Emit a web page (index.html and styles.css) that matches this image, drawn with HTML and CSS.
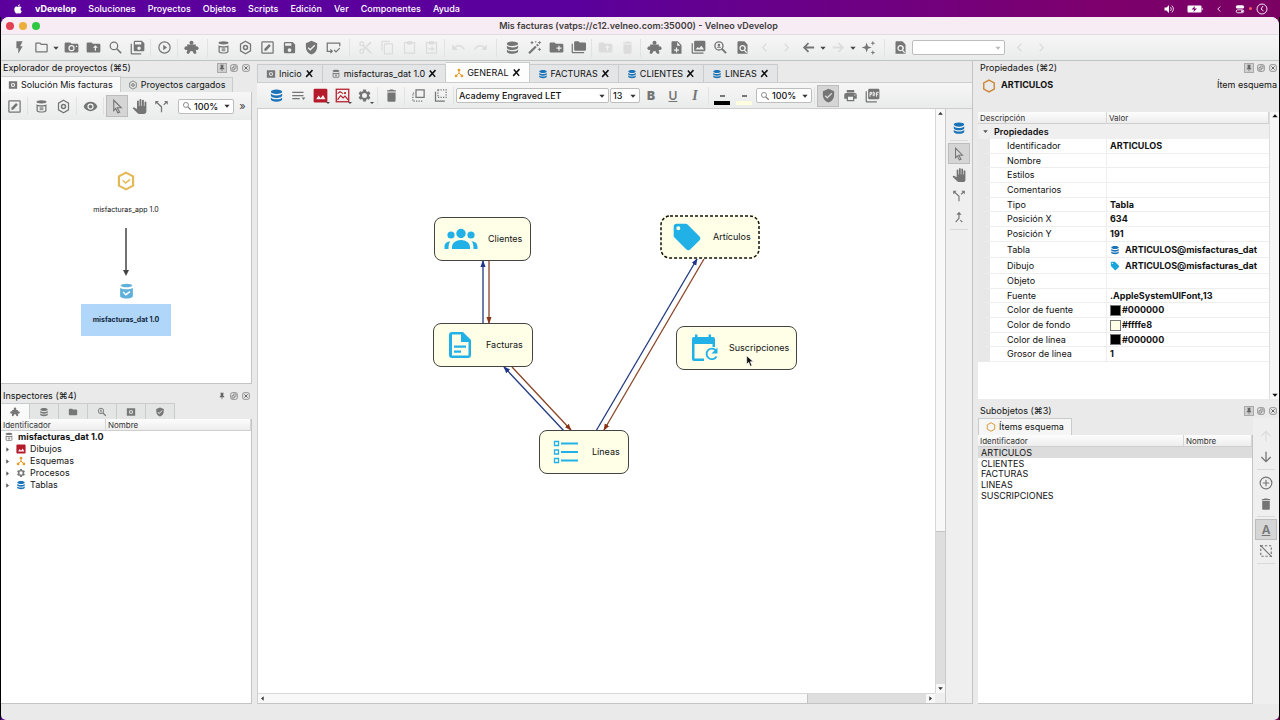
FILE: index.html
```html
<!DOCTYPE html>
<html lang="es">
<head>
<meta charset="utf-8">
<title>Mis facturas - Velneo vDevelop</title>
<link rel="stylesheet" href="styles.css">
</head>
<body>
<svg class="sprite" aria-hidden="true">
<symbol id="apple" viewBox="0 0 24 24"><path d="M17 12.600c0-2.400 2-3.500 2-3.600-1.100-1.600-2.800-1.800-3.400-1.800-1.400-.2-2.800.8-3.500.8s-1.800-.8-3-.8c-1.500 0-3 .9-3.800 2.300-1.600 2.800-.4 7 1.200 9.300.8 1.100 1.700 2.400 2.900 2.300 1.200 0 1.600-.8 3-.8s1.800.8 3 .7c1.300 0 2.100-1.100 2.900-2.200.9-1.300 1.300-2.600 1.300-2.600s-2.600-1-2.600-3.600zM14.700 5.700c.6-.8 1.100-1.900 1-3-1 0-2.100.6-2.800 1.400-.6.7-1.200 1.800-1 2.900 1.100.1 2.200-.5 2.800-1.300z"/></symbol>
<symbol id="sound" viewBox="0 0 24 24"><path d="M3 9v6h4l5 5V4L7 9z"/><path d="M14.500 8a5 5 0 0 1 0 8M17.500 5a9 9 0 0 1 0 14" fill="none" stroke="currentColor" stroke-width="1.600"/></symbol>
<symbol id="battery" viewBox="0 0 34 24"><path d="M5 5h24a2 2 0 0 1 2 2v10a2 2 0 0 1-2 2H5a2 2 0 0 1-2-2V7a2 2 0 0 1 2-2zm13 1l-7 7h5l-1 5 7-7h-5zM32 9.500v5c2-.5 2-4.500 0-5z" fill-rule="evenodd"/></symbol>
<symbol id="control" viewBox="0 0 24 24"><rect x="2" y="3" width="20" height="8" rx="4"/><rect x="3" y="14" width="18" height="7" rx="3.500" fill="none" stroke="currentColor" stroke-width="2"/><circle cx="17" cy="17.500" r="2.500"/></symbol>
<symbol id="siri" viewBox="0 0 24 24"><circle cx="12" cy="12" r="10" fill="none" stroke="currentColor" stroke-width="1.800"/><path d="M14 6l-4 6 5 4" fill="none" stroke="currentColor" stroke-width="1.800"/></symbol>
<symbol id="bolt" viewBox="0 0 24 24"><path d="M7 2v11h3v9l7-12h-4l4-8z"/></symbol>
<symbol id="folder-o" viewBox="0 0 24 24"><path d="M9.170 6l2 2H20v10H4V6h5.170M10 4H4c-1.100 0-2 .9-2 2v12c0 1.100.9 2 2 2h16c1.100 0 2-.9 2-2V8c0-1.100-.9-2-2-2h-8l-2-2z"/></symbol>
<symbol id="folder" viewBox="0 0 24 24"><path d="M10 4H4c-1.100 0-2 .9-2 2v12c0 1.100.9 2 2 2h16c1.100 0 2-.9 2-2V8c0-1.100-.9-2-2-2h-8l-2-2z"/></symbol>
<symbol id="folder-cog" viewBox="0 0 24 24"><path fill-rule="evenodd" d="M10 4H3c-1 0-2 .9-2 2v12c0 1.100 1 2 2 2h18c1 0 2-.9 2-2V8c0-1.100-1-2-2-2h-9zM12 8a5 5 0 1 0 0 10 5 5 0 0 0 0-10zm0 2a3 3 0 1 1 0 6 3 3 0 0 1 0-6zM19 9h2v2h-2z"/><circle cx="12" cy="13" r="1.500"/></symbol>
<symbol id="folder-up" viewBox="0 0 24 24"><path fill-rule="evenodd" d="M9 4H3c-1 0-2 .9-2 2v12c0 1.100 1 2 2 2h18c1 0 2-.9 2-2V8c0-1.100-1-2-2-2h-10zM15 8.500l-4 4h3V17h2v-4.500h3z"/></symbol>
<symbol id="folder-plus" viewBox="0 0 24 24"><path fill-rule="evenodd" d="M9 4H3c-1 0-2 .9-2 2v12c0 1.100 1 2 2 2h18c1 0 2-.9 2-2V8c0-1.100-1-2-2-2h-10zM15 9h2v3h3v2h-3v3h-2v-3h-3v-2h3z"/></symbol>
<symbol id="folders" viewBox="0 0 24 24"><path d="M12 2H7a2 2 0 0 0-2 2v11c0 1.100.9 2 2 2h15a2 2 0 0 0 2-2V6a2 2 0 0 0-2-2h-8zM3 6H1v13a2 2 0 0 0 2 2h18v-2H3z"/></symbol>
<symbol id="search" viewBox="0 0 24 24"><circle cx="9.500" cy="9.500" r="6" fill="none" stroke="currentColor" stroke-width="2"/><path d="M14 14l7 7" stroke="currentColor" stroke-width="2.600"/></symbol>
<symbol id="search-gear" viewBox="0 0 24 24"><circle cx="9.500" cy="9.500" r="6.500" fill="none" stroke="currentColor" stroke-width="2.200"/><path d="M14 14l7 7" stroke="currentColor" stroke-width="3"/><circle cx="9.500" cy="8" r="2"/><path d="M6 12.500c1-3 6-3 7 0z"/></symbol>
<symbol id="save" viewBox="0 0 24 24"><path d="M17 3H5a2 2 0 0 0-2 2v14c0 1.100.9 2 2 2h14c1.100 0 2-.9 2-2V7l-4-4zm-5 16a3 3 0 1 1 0-6 3 3 0 0 1 0 6zm3-10H5V5h10v4z"/></symbol>
<symbol id="save-all" viewBox="0 0 24 24"><path d="M19 1H8a2 2 0 0 0-2 2v13c0 1.100.9 2 2 2h13c1.100 0 2-.9 2-2V5l-4-4zm-4.500 15a2.800 2.800 0 1 1 0-5.600 2.800 2.800 0 0 1 0 5.600zM18 7H8V3h10v4zM3 6H1v15a2 2 0 0 0 2 2h15v-2H3z"/></symbol>
<symbol id="play" viewBox="0 0 24 24"><path d="M10 16.500l6-4.500-6-4.500v9zM12 2a10 10 0 1 0 0 20 10 10 0 0 0 0-20zm0 18a8 8 0 1 1 0-16 8 8 0 0 1 0 16z"/></symbol>
<symbol id="puzzle4" viewBox="0 0 24 24"><path d="M5 7h14v13.500h-4a3 3 0 0 0-6 0H5z"/><circle cx="12" cy="4.500" r="3.200"/><circle cx="20.300" cy="13" r="3"/><circle cx="3.700" cy="13" r="3"/><circle cx="6.500" cy="20" r="2.300"/><circle cx="17.500" cy="20" r="2.300"/></symbol>
<symbol id="cyl" viewBox="0 0 24 24"><ellipse cx="12" cy="4.500" rx="8" ry="2.700"/><path d="M4 8.500c3 2 13 2 16 0V19c-2 3.500-14 3.500-16 0zm2 3v7c2 2 10 2 12 0v-7c-3 1-9 1-12 0z" fill-rule="evenodd"/><path d="M9 13h6v5H9z" opacity=".7"/></symbol>
<symbol id="cyl-ok" viewBox="0 0 24 24"><ellipse cx="12" cy="3.500" rx="8" ry="2.500"/><path d="M3 7c4 2.500 14 2.500 18 0v12c-3 4-15 4-18 0zm3.500 6L11 18l6.500-5-1.200-1.600L11 15l-3-3z" fill-rule="evenodd"/></symbol>
<symbol id="hexcog" viewBox="0 0 24 24"><path d="M12 2l8 4.700v10.600L12 22l-8-4.700V6.700z" fill="none" stroke="currentColor" stroke-width="2"/><circle cx="12" cy="12" r="3.200" fill="none" stroke="currentColor" stroke-width="2.400"/></symbol>
<symbol id="hexok" viewBox="0 0 24 24"><path d="M12 2l8.500 4.500v11L12 22l-8.500-4.500v-11z" fill="none" stroke="currentColor" stroke-width="2.600"/><path d="M8 11l3.500 3.500L17 10" fill="none" stroke="currentColor" stroke-width="1.800"/></symbol>
<symbol id="hex" viewBox="0 0 24 24"><path d="M12 1.800l9 5v10.400l-9 5-9-5V6.800z" fill="none" stroke="currentColor" stroke-width="2.400"/></symbol>
<symbol id="editbox" viewBox="0 0 24 24"><rect x="3" y="3" width="18" height="18" rx="1" fill="none" stroke="currentColor" stroke-width="2"/><path d="M7 17v-3l7.500-7.500 2.800 2.800L10 17z"/></symbol>
<symbol id="shield" viewBox="0 0 24 24"><path d="M12 1L3 5v6c0 5.550 3.840 10.740 9 12 5.160-1.260 9-6.450 9-12V5l-9-4zm-2 16l-4-4 1.410-1.410L10 14.170l6.590-6.590L18 9l-8 8z"/></symbol>
<symbol id="boxcheck" viewBox="0 0 24 24"><path d="M22 10V5H2v13h8M7 21l3-3-3-3M13 16l3 3 6-6" fill="none" stroke="currentColor" stroke-width="2"/></symbol>
<symbol id="cut" viewBox="0 0 24 24"><path d="M9.640 7.640c.23-.5.36-1.050.36-1.640a4 4 0 1 0-4 4c.59 0 1.140-.13 1.640-.36L10 12l-2.360 2.360A4 4 0 1 0 10 18c0-.59-.13-1.140-.36-1.640L12 14l7 7h3v-1L9.640 7.640zM6 8a2 2 0 1 1 0-4 2 2 0 0 1 0 4zm0 12a2 2 0 1 1 0-4 2 2 0 0 1 0 4zM19 3l-6 6 2 2 7-7V3z"/></symbol>
<symbol id="copy" viewBox="0 0 24 24"><path d="M16 1H4a2 2 0 0 0-2 2v14h2V3h12V1zm3 4H8a2 2 0 0 0-2 2v14c0 1.100.9 2 2 2h11c1.100 0 2-.9 2-2V7a2 2 0 0 0-2-2zm0 16H8V7h11v14z"/></symbol>
<symbol id="paste" viewBox="0 0 24 24"><path d="M4 4h16v17H4z" fill="none" stroke="currentColor" stroke-width="2"/><path d="M8 2h8v5H8z"/></symbol>
<symbol id="paste-in" viewBox="0 0 24 24"><path d="M4 4h16v17H4z" fill="none" stroke="currentColor" stroke-width="2"/><path d="M8 2h8v5H8zM7 13h5v-3l5 4-5 4v-3H7z"/></symbol>
<symbol id="undo" viewBox="0 0 24 24"><path d="M12.500 8c-2.650 0-5.050.99-6.900 2.600L2 7v9h9l-3.620-3.620c1.390-1.160 3.160-1.880 5.120-1.880 3.540 0 6.550 2.310 7.600 5.500l2.370-.78C21.080 11.030 17.150 8 12.500 8z"/></symbol>
<symbol id="redo" viewBox="0 0 24 24"><path d="M11.500 8c2.650 0 5.050.99 6.900 2.600L22 7v9h-9l3.620-3.620c-1.390-1.160-3.160-1.880-5.120-1.880-3.540 0-6.550 2.310-7.600 5.500l-2.370-.78C2.920 11.030 6.850 8 11.500 8z"/></symbol>
<symbol id="db" viewBox="0 0 24 24"><path d="M12 2.500c-5 0-9 1.500-9 3.600s4 3.600 9 3.600 9-1.500 9-3.600-4-3.600-9-3.600zM3 8.800v3.700c0 2 4 3.500 9 3.500s9-1.500 9-3.500V8.800c-1 2-4.500 3-9 3s-8-1-9-3zM3 15v3.500C3 20.500 7 22 12 22s9-1.500 9-3.500V15c-1 2-4.500 3-9 3s-8-1-9-3z"/></symbol>
<symbol id="wand" viewBox="0 0 24 24"><path d="M2 20L13 9l2.500 2.500-11 11z"/><path d="M14.500 8l2-2 2.500 2.500-2 2zM5 4l2-1 1-2 1 2 2 1-2 1-1 2-1-2zM19 14l1-2 1 2 2 1-2 1-1 2-1-2-2-1zM20 1l1 2 2 1-2 1-1 2-1-2-2-1 2-1zM13 2h2v2h-2z"/></symbol>
<symbol id="trash" viewBox="0 0 24 24"><path d="M5.500 20c0 1.100.9 2 2 2h9c1.100 0 2-.9 2-2V7h-13v13zM19 3.500h-3.500l-1-1h-5l-1 1H5v2h14v-2z"/></symbol>
<symbol id="docplus" viewBox="0 0 24 24"><path fill-rule="evenodd" d="M5 2h9l6 6v14H5a1 1 0 0 1-1-1V3zM13 3.500V9h5.500zM11 12v3H8v2h3v3h2v-3h3v-2h-3v-3z"/></symbol>
<symbol id="images" viewBox="0 0 24 24"><path fill-rule="evenodd" d="M7 1h14a2 2 0 0 1 2 2v13a2 2 0 0 1-2 2H7a2 2 0 0 1-2-2V3c0-1 1-2 2-2zm0 14h14l-4.500-6-3.500 4-2-2zM3 5H1v15a2 2 0 0 0 2 2h17v-2H3z"/></symbol>
<symbol id="docfind" viewBox="0 0 24 24"><path fill-rule="evenodd" d="M5 2h10l5 5v15H4V3zm7 6a5 5 0 1 0 2.500 9.300L18 21l1.400-1.400-3.200-3.200A5 5 0 0 0 12 8zm0 2a3 3 0 1 1 0 6 3 3 0 0 1 0-6z"/></symbol>
<symbol id="chev-l" viewBox="0 0 24 24"><path d="M15 6l-6 6 6 6" fill="none" stroke="currentColor" stroke-width="2"/></symbol>
<symbol id="chev-r" viewBox="0 0 24 24"><path d="M9 6l6 6-6 6" fill="none" stroke="currentColor" stroke-width="2"/></symbol>
<symbol id="back" viewBox="0 0 24 24"><path d="M21 10.500H8.500l4.500-4.600L11 4l-8 8 8 8 2-1.900-4.500-4.600H21z"/></symbol>
<symbol id="fwd" viewBox="0 0 24 24"><path d="M3 10.500h12.500L11 5.900 13 4l8 8-8 8-2-1.900 4.500-4.600H3z"/></symbol>
<symbol id="sparkle" viewBox="0 0 24 24"><path d="M9 4l2 6 6 2-6 2-2 6-2-6-6-2 6-2zM19 1l1 3 3 1-3 1-1 3-1-3-3-1 3-1zM19 16l1 3 3 1-3 1-1 3-1-3-3-1 3-1z"/></symbol>
<symbol id="eye" viewBox="0 0 24 24"><path d="M12 4.500C7 4.500 2.730 7.610 1 12c1.730 4.390 6 7.500 11 7.500s9.270-3.110 11-7.500c-1.730-4.390-6-7.500-11-7.500zM12 17a5 5 0 1 1 0-10 5 5 0 0 1 0 10zm0-8a3 3 0 1 0 0 6 3 3 0 0 0 0-6z"/></symbol>
<symbol id="cursor" viewBox="0 0 24 24"><path d="M6 2l12 12h-6.500l4 7-3 1.200-3.500-7L6 18.500z" fill="none" stroke="currentColor" stroke-width="1.800"/></symbol>
<symbol id="hand" viewBox="0 0 24 24"><path d="M23 5.500V20c0 2.200-1.800 4-4 4h-7.300c-1.080 0-2.100-.43-2.850-1.190L1 14.830s1.260-1.230 1.300-1.250c.5-.4 1-.3 1.390-.13.04.01 4.310 2.460 4.310 2.460V4a1.500 1.500 0 0 1 3 0v7h1V1.500a1.500 1.500 0 0 1 3 0V11h1V2.500a1.500 1.500 0 0 1 3 0V11h1V5.500a1.500 1.500 0 0 1 3 0z"/></symbol>
<symbol id="split" viewBox="0 0 24 24"><path d="M16 3l2.300 2.300-3.500 3.300 1.400 1.400 3.500-3.300L22 9V3zM8 3H2v6l2.300-2.300L11 13v8h2v-9L5.700 5.300z"/></symbol>
<symbol id="merge" viewBox="0 0 24 24"><path d="M17 21.400l1.400-1.400-3.400-3.400-1.400 1.400zM7.500 8H11v5.600L5.600 20 7 21.400l6-7V8h3.500L12 3z"/></symbol>
<symbol id="lines" viewBox="0 0 24 24"><path d="M2 6h18v2H2zM2 11h18v2H2zM2 16h12v2H2zM17 15h6l-3 4z"/></symbol>
<symbol id="image" viewBox="0 0 24 24"><path d="M23 21V3a2 2 0 0 0-2-2H3a2 2 0 0 0-2 2v18c0 1.100.9 2 2 2h18a2 2 0 0 0 2-2zM5 18l4-6 3 4 2-2 2-3 4 7z"/></symbol>
<symbol id="image-o" viewBox="0 0 24 24"><rect x="2" y="2" width="20" height="20" fill="none" stroke="currentColor" stroke-width="2"/><path d="M4 19l5-7 4 4 3-3 5 6M4 9l4-3 5 3" fill="none" stroke="currentColor" stroke-width="1.800"/><circle cx="16" cy="8" r="1.800"/></symbol>
<symbol id="gear" viewBox="0 0 24 24"><path d="M19.140 12.940a7 7 0 0 0 0-1.880l2.030-1.580a.49.49 0 0 0 .12-.61l-1.920-3.320a.49.49 0 0 0-.59-.22l-2.390.96a7 7 0 0 0-1.620-.94l-.36-2.540a.48.48 0 0 0-.48-.41h-3.840a.48.48 0 0 0-.47.41l-.36 2.540a7.300 7.300 0 0 0-1.620.94l-2.390-.96a.48.48 0 0 0-.59.22L2.740 8.870a.48.48 0 0 0 .12.61l2.030 1.580a7 7 0 0 0 0 1.880l-2.030 1.580a.49.49 0 0 0-.12.61l1.920 3.320c.12.22.37.29.59.22l2.390-.96c.5.38 1.030.7 1.620.94l.36 2.540c.05.24.24.41.48.41h3.840c.24 0 .44-.17.47-.41l.36-2.540a7 7 0 0 0 1.620-.94l2.390.96c.22.08.47 0 .59-.22l1.920-3.320a.48.48 0 0 0-.12-.61zM12 16a4 4 0 1 1 0-8 4 4 0 0 1 0 8z"/></symbol>
<symbol id="front" viewBox="0 0 24 24"><rect x="8" y="3" width="13" height="12" fill="none" stroke="currentColor" stroke-width="2"/><path d="M5 8H3v13h14v-3" fill="none" stroke="currentColor" stroke-width="2" stroke-dasharray="2 2"/></symbol>
<symbol id="rear" viewBox="0 0 24 24"><rect x="8" y="3" width="13" height="12" fill="none" stroke="currentColor" stroke-width="2" stroke-dasharray="2 2"/><path d="M4 6v15h15" fill="none" stroke="currentColor" stroke-width="2"/></symbol>
<symbol id="print" viewBox="0 0 24 24"><path d="M19 8H5c-1.660 0-3 1.340-3 3v6h4v4h12v-4h4v-6c0-1.660-1.340-3-3-3zm-3 11H8v-5h8v5zm3-7a1 1 0 1 1 0-2 1 1 0 0 1 0 2zm-1-9H6v4h12V3z"/></symbol>
<symbol id="pdf" viewBox="0 0 24 24"><path d="M7 1h14a2 2 0 0 1 2 2v13a2 2 0 0 1-2 2H7a2 2 0 0 1-2-2V3c0-1 1-2 2-2zM3 5H1v16a2 2 0 0 0 2 2h16v-2H3z"/><path d="M8 14V7h2.500v3H8M13 6.500v6h1.500c1.500 0 1.500-6 0-6zM18.500 14V7H22M18.500 10H21" fill="none" stroke="#fff" stroke-width="1.400"/></symbol>
<symbol id="scheme" viewBox="0 0 24 24"><path d="M12 5v8M12 12l-7 7M12 12l7 7" fill="none" stroke="currentColor" stroke-width="2.400"/><circle cx="12" cy="5" r="3.500"/><circle cx="5" cy="19" r="3.300"/><circle cx="19" cy="19" r="3.300"/></symbol>
<symbol id="screen" viewBox="0 0 24 24"><path fill-rule="evenodd" d="M2 3h20v18H2zm10 4a5 5 0 1 0 0 10 5 5 0 0 0 0-10zm0 2.500a2.500 2.500 0 1 1 0 5 2.500 2.500 0 0 1 0-5z"/></symbol>
<symbol id="x" viewBox="0 0 24 24"><path d="M3 21L20 3M5 4l14 17" fill="none" stroke="currentColor" stroke-width="4"/></symbol>
<symbol id="pin" viewBox="0 0 24 24"><path d="M7 2h10v2h-1v7l3 3v2h-6v6h-2v-6H5v-2l3-3V4H7z"/></symbol>
<symbol id="float" viewBox="0 0 24 24"><rect x="2" y="2" width="20" height="20" rx="5" fill="none" stroke="currentColor" stroke-width="2"/><path d="M6 11h7v7H6zM10 8V6h8v8h-2" fill="none" stroke="currentColor" stroke-width="2"/></symbol>
<symbol id="close" viewBox="0 0 24 24"><rect x="2" y="2" width="20" height="20" rx="5" fill="none" stroke="currentColor" stroke-width="2"/><path d="M7 7l10 10M17 7L7 17" fill="none" stroke="currentColor" stroke-width="3"/></symbol>
<symbol id="down" viewBox="0 0 24 24"><path d="M4 8h16l-8 9z"/></symbol>
<symbol id="up" viewBox="0 0 24 24"><path d="M4 16h16l-8-9z"/></symbol>
<symbol id="right" viewBox="0 0 24 24"><path d="M8 4v16l9-8z"/></symbol>
<symbol id="left" viewBox="0 0 24 24"><path d="M16 4v16l-9-8z"/></symbol>
<symbol id="tag" viewBox="0 0 24 24"><path d="M21.410 11.580l-9-9C12.050 2.220 11.550 2 11 2H4c-1.100 0-2 .9-2 2v7c0 .55.22 1.050.59 1.420l9 9c.78.78 2.050.78 2.820 0l7-7c.78-.78.78-2.060 0-2.840zM5.500 7a1.500 1.500 0 1 1 0-3 1.500 1.500 0 0 1 0 3z"/></symbol>
<symbol id="people" viewBox="0 0 34 24"><circle cx="17" cy="6.500" r="4.700"/><circle cx="7" cy="8" r="3.600"/><circle cx="27" cy="8" r="3.600"/><path d="M8 22v-2c0-4 4-7 9-7s9 3 9 7v2zM.5 22v-2.500c0-3 2.500-5 6-5.200-1.500 1.500-2 3.700-2 7.700zM33.500 22v-2.500c0-3-2.500-5-6-5.200 1.500 1.500 2 3.700 2 7.700z"/></symbol>
<symbol id="doc" viewBox="0 0 24 28"><path fill-rule="evenodd" d="M4 1h11l8 8v15a3 3 0 0 1-3 3H4a3 3 0 0 1-3-3V4a3 3 0 0 1 3-3zm0 2.500v21h16.500V11H13V3.500z"/><path d="M6 14.500h12v2.200H6zM6 19.500h7v2.200H6z"/></symbol>
<symbol id="list" viewBox="0 0 26 24"><path d="M8 2.500h17v2H8zM8 11h17v2H8zM8 19.500h17v2H8z"/><path d="M1.500 1.500h4v4h-4zM1.500 10h4v4h-4zM1.500 18.500h4v4h-4z" fill="none" stroke="currentColor" stroke-width="1.300"/></symbol>
<symbol id="calendar" viewBox="0 0 28 28"><path d="M5 3V.5h2.500V3h11V.5H21V3h2a2 2 0 0 1 2 2v8h-2.500v-3h-18v14.500H14V27H4a2 2 0 0 1-2-2V5c0-1.200.8-2 2-2z"/><path d="M26 16.500a5.300 5.300 0 1 0 .5 6" fill="none" stroke="currentColor" stroke-width="1.800"/><path d="M27.500 13.500v6h-6z"/></symbol>
<symbol id="plus-c" viewBox="0 0 24 24"><path d="M12 2a10 10 0 1 0 0 20 10 10 0 0 0 0-20zM6.500 12h11M12 6.500v11" fill="none" stroke="currentColor" stroke-width="2"/></symbol>
<symbol id="arr-up" viewBox="0 0 24 24"><path d="M12 21V4M4 12l8-8 8 8" fill="none" stroke="currentColor" stroke-width="2"/></symbol>
<symbol id="arr-dn" viewBox="0 0 24 24"><path d="M12 3v17M4 12l8 8 8-8" fill="none" stroke="currentColor" stroke-width="2.200"/></symbol>
<symbol id="nosel" viewBox="0 0 24 24"><rect x="3" y="3" width="18" height="18" fill="none" stroke="currentColor" stroke-width="2" stroke-dasharray="4 3"/><path d="M2 2l20 20" stroke="currentColor" stroke-width="2"/></symbol>
</svg>

<div class="desktop">
<nav class="menubar">
  <button class="menu"><svg class="i12"><use href="#apple"/></svg></button>
  <button class="menu app">vDevelop</button><button class="menu">Soluciones</button><button class="menu">Proyectos</button><button class="menu">Objetos</button><button class="menu">Scripts</button><button class="menu">Edición</button><button class="menu">Ver</button><button class="menu">Componentes</button><button class="menu">Ayuda</button>
  <div class="status"><svg class="i12"><use href="#sound"/></svg><svg class="batt"><use href="#battery"/></svg><svg class="i10"><use href="#chev-l"/></svg><svg class="i10"><use href="#control"/></svg><i class="dot"></i><svg class="i12"><use href="#siri"/></svg></div>
</nav>

<div class="frame">
<div class="window">
<header class="titlebar"><span class="light red"></span><span class="light amber"></span><span class="light green"></span><h1>Mis facturas (vatps://c12.velneo.com:35000) - Velneo vDevelop</h1></header>

<div class="toolbar main-tools">
  <button class="tb"><svg><use href="#bolt"/></svg></button>
  <button class="tb"><svg><use href="#folder-o"/></svg></button><svg class="caret"><use href="#down"/></svg>
  <button class="tb"><svg><use href="#folder-cog"/></svg></button>
  <button class="tb"><svg><use href="#folder-up"/></svg></button>
  <button class="tb"><svg><use href="#search"/></svg></button>
  <button class="tb"><svg><use href="#save-all"/></svg></button><i class="sep"></i>
  <button class="tb"><svg><use href="#play"/></svg></button><i class="sep"></i>
  <button class="tb"><svg><use href="#puzzle4"/></svg></button><i class="sep wide"></i>
  <button class="tb"><svg><use href="#cyl"/></svg></button>
  <button class="tb"><svg><use href="#hexcog"/></svg></button>
  <button class="tb"><svg><use href="#editbox"/></svg></button>
  <button class="tb"><svg><use href="#save"/></svg></button>
  <button class="tb"><svg><use href="#shield"/></svg></button>
  <button class="tb"><svg><use href="#boxcheck"/></svg></button><i class="sep wide"></i>
  <button class="tb" disabled><svg><use href="#cut"/></svg></button>
  <button class="tb" disabled><svg><use href="#copy"/></svg></button>
  <button class="tb" disabled><svg><use href="#paste"/></svg></button>
  <button class="tb" disabled><svg><use href="#paste-in"/></svg></button><i class="sep"></i>
  <button class="tb" disabled><svg><use href="#undo"/></svg></button>
  <button class="tb" disabled><svg><use href="#redo"/></svg></button><i class="sep wide"></i>
  <button class="tb"><svg><use href="#db"/></svg></button>
  <button class="tb"><svg><use href="#wand"/></svg></button>
  <button class="tb"><svg><use href="#folder-plus"/></svg></button>
  <button class="tb"><svg><use href="#folders"/></svg></button><i class="sep"></i>
  <button class="tb" disabled><svg><use href="#folder-up"/></svg></button>
  <button class="tb" disabled><svg><use href="#trash"/></svg></button><i class="sep"></i>
  <button class="tb"><svg><use href="#puzzle4"/></svg></button>
  <button class="tb"><svg><use href="#docplus"/></svg></button>
  <button class="tb"><svg><use href="#images"/></svg></button>
  <button class="tb"><svg><use href="#search-gear"/></svg></button>
  <button class="tb"><svg><use href="#docfind"/></svg></button>
  <button class="tb" disabled><svg><use href="#chev-l"/></svg></button>
  <button class="tb" disabled><svg><use href="#chev-r"/></svg></button>
  <button class="tb"><svg><use href="#back"/></svg></button><svg class="caret"><use href="#down"/></svg>
  <button class="tb" disabled><svg><use href="#fwd"/></svg></button><svg class="caret"><use href="#down"/></svg>
  <button class="tb"><svg><use href="#sparkle"/></svg></button><i class="sep wide"></i>
  <button class="tb"><svg><use href="#docfind"/></svg></button>
  <span class="combo finder off"><select aria-label="Buscar"><option></option></select><svg><use href="#down"/></svg></span>
  <button class="tb" disabled><svg><use href="#chev-l"/></svg></button>
  <button class="tb" disabled><svg><use href="#chev-r"/></svg></button>
</div>

<div class="workspace">
  <aside class="left">
    <section class="dock explorer">
      <div class="dock-title"><h2>Explorador de proyectos (⌘5)</h2><button class="mini on"><svg><use href="#pin"/></svg></button><button class="mini"><svg><use href="#float"/></svg></button><button class="mini"><svg><use href="#close"/></svg></button></div>
      <div class="subtabs"><button class="subtab active"><svg><use href="#screen"/></svg>Solución Mis facturas</button><button class="subtab"><svg><use href="#hexcog"/></svg>Proyectos cargados</button></div>
      <div class="toolbar left-tools">
        <button class="tb"><svg><use href="#editbox"/></svg></button><i class="sep"></i>
        <button class="tb"><svg><use href="#cyl"/></svg></button>
        <button class="tb"><svg><use href="#hexcog"/></svg></button><i class="sep"></i>
        <button class="tb"><svg><use href="#eye"/></svg></button><i class="sep"></i>
        <button class="tb pressed"><svg><use href="#cursor"/></svg></button>
        <button class="tb"><svg><use href="#hand"/></svg></button>
        <button class="tb"><svg><use href="#split"/></svg></button>
        <span class="combo zoom"><svg class="lead"><use href="#search"/></svg><select aria-label="Zoom del explorador"><option>100%</option></select><svg><use href="#down"/></svg></span>
        <button class="more">»</button>
      </div>
      <div class="tree-canvas">
        <svg class="app-icon"><use href="#hexok"/></svg>
        <span class="app-name">misfacturas_app 1.0</span>
        <svg class="dep" viewBox="0 0 8 48"><path d="M4 0v44" stroke="#444" stroke-width="1.500"/><path d="M1 42h6l-3 6z" fill="#444"/></svg>
        <svg class="dat-icon"><use href="#cyl-ok"/></svg>
        <strong class="dat-name">misfacturas_dat 1.0</strong>
      </div>
    </section>
    <section class="dock inspectors">
      <div class="dock-title"><h2>Inspectores (⌘4)</h2><button class="mini"><svg><use href="#pin"/></svg></button><button class="mini"><svg><use href="#float"/></svg></button><button class="mini"><svg><use href="#close"/></svg></button></div>
      <div class="subtabs icons"><button class="subtab active"><svg><use href="#puzzle4"/></svg></button><button class="subtab"><svg><use href="#db"/></svg></button><button class="subtab"><svg><use href="#folder"/></svg></button><button class="subtab"><svg><use href="#search-gear"/></svg></button><button class="subtab"><svg><use href="#screen"/></svg></button><button class="subtab"><svg><use href="#shield"/></svg></button></div>
      <div class="sheet">
      <table class="tree">
        <thead><tr><th>Identificador</th><th>Nombre</th></tr></thead>
        <tbody>
        <tr><td colspan="2"><div class="item root"><svg class="grey"><use href="#cyl"/></svg>misfacturas_dat 1.0</div></td></tr>
        <tr><td colspan="2"><div class="item"><svg class="tri"><use href="#right"/></svg><svg class="red"><use href="#image"/></svg>Dibujos</div></td></tr>
        <tr><td colspan="2"><div class="item"><svg class="tri"><use href="#right"/></svg><svg class="orange"><use href="#scheme"/></svg>Esquemas</div></td></tr>
        <tr><td colspan="2"><div class="item"><svg class="tri"><use href="#right"/></svg><svg class="grey"><use href="#gear"/></svg>Procesos</div></td></tr>
        <tr><td colspan="2"><div class="item"><svg class="tri"><use href="#right"/></svg><svg class="blue"><use href="#db"/></svg>Tablas</div></td></tr>
        </tbody>
      </table>
      </div>
    </section>
  </aside>

  <main class="centre">
    <div class="tabs">
      <div class="tab"><svg class="grey"><use href="#screen"/></svg>Inicio<button><svg><use href="#x"/></svg></button></div>
      <div class="tab"><svg class="grey"><use href="#cyl"/></svg>misfacturas_dat 1.0<button><svg><use href="#x"/></svg></button></div>
      <div class="tab active"><svg class="orange"><use href="#scheme"/></svg>GENERAL<button><svg><use href="#x"/></svg></button></div>
      <div class="tab"><svg class="blue"><use href="#db"/></svg>FACTURAS<button><svg><use href="#x"/></svg></button></div>
      <div class="tab"><svg class="blue"><use href="#db"/></svg>CLIENTES<button><svg><use href="#x"/></svg></button></div>
      <div class="tab"><svg class="blue"><use href="#db"/></svg>LINEAS<button><svg><use href="#x"/></svg></button></div>
    </div>
    <div class="toolbar edit-tools">
      <button class="tb blue"><svg><use href="#db"/></svg></button>
      <button class="tb"><svg><use href="#lines"/></svg></button>
      <button class="tb red drop"><svg><use href="#image"/></svg></button>
      <button class="tb red drop"><svg><use href="#image-o"/></svg></button>
      <button class="tb drop"><svg><use href="#gear"/></svg></button><i class="sep"></i>
      <button class="tb"><svg><use href="#trash"/></svg></button><i class="sep"></i>
      <button class="tb"><svg><use href="#front"/></svg></button>
      <button class="tb"><svg><use href="#rear"/></svg></button><i class="sep"></i>
      <span class="combo font"><select aria-label="Fuente"><option>Academy Engraved LET</option></select><svg><use href="#down"/></svg></span>
      <span class="combo size"><select aria-label="Tamaño"><option>13</option></select><svg><use href="#down"/></svg></span>
      <button class="tb letter"><b>B</b></button><button class="tb letter"><u>U</u></button><button class="tb letter serif"><em>I</em></button><i class="sep"></i>
      <button class="tb swatch ink" aria-label="Color de línea"></button><button class="tb swatch paper" aria-label="Color de fondo"></button>
      <span class="combo zoom"><svg class="lead"><use href="#search"/></svg><select aria-label="Zoom"><option>100%</option></select><svg><use href="#down"/></svg></span><i class="sep"></i>
      <button class="tb pressed"><svg><use href="#shield"/></svg></button>
      <button class="tb"><svg><use href="#print"/></svg></button>
      <button class="tb"><svg><use href="#pdf"/></svg></button>
    </div>
    <div class="editor">
      <div class="canvas">
        <svg class="links" width="678" height="585">
          <defs>
            <marker id="mb" viewBox="0 0 8 8" refX="7" refY="4" markerWidth="7" markerHeight="7" markerUnits="userSpaceOnUse" orient="auto"><path d="M0 1l8 3-8 3z" fill="#20358c"/></marker>
            <marker id="mr" viewBox="0 0 8 8" refX="7" refY="4" markerWidth="7" markerHeight="7" markerUnits="userSpaceOnUse" orient="auto"><path d="M0 1l8 3-8 3z" fill="#8a3518"/></marker>
          </defs>
          <g fill="none" stroke="#20397f" stroke-width="1.300"><path d="M225 215V152" marker-end="url(#mb)"/><path d="M306 322L246 258" marker-end="url(#mb)"/><path d="M338 322L439 150" marker-end="url(#mb)"/></g>
          <g fill="none" stroke="#8a4526" stroke-width="1.300"><path d="M231 152V214" marker-end="url(#mr)"/><path d="M254 258L313 321" marker-end="url(#mr)"/><path d="M446 150L346 321" marker-end="url(#mr)"/></g>
        </svg>
        <div class="node clientes"><svg class="w34"><use href="#people"/></svg>Clientes</div>
        <div class="node facturas"><svg class="w24"><use href="#doc"/></svg>Facturas</div>
        <div class="node lineas"><svg class="w26"><use href="#list"/></svg>Líneas</div>
        <div class="node articulos"><svg class="outline"><rect x="1" y="1" width="98" height="42" rx="9"/></svg><svg class="w32"><use href="#tag"/></svg>Artículos</div>
        <div class="node suscripciones"><svg class="w28"><use href="#calendar"/></svg>Suscripciones</div>
        <svg class="pointer" viewBox="0 0 12 18"><path d="M1 1v13l3-3 2.500 6 2.500-1-2.500-6H11z" stroke="#fff" stroke-width="1"/></svg>
      </div>
      <div class="vscroll"><svg><use href="#up"/></svg><div class="vtrack"><div class="vthumb"></div></div><svg><use href="#down"/></svg></div>
      <div class="hscroll"><svg><use href="#left"/></svg><div class="htrack"><div class="hthumb"></div></div><svg><use href="#right"/></svg></div>
      <div class="corner"></div>
      <div class="side-tools">
        <button class="tb blue"><svg><use href="#db"/></svg></button><i class="hsep"></i>
        <button class="tb pressed"><svg><use href="#cursor"/></svg></button>
        <button class="tb"><svg><use href="#hand"/></svg></button>
        <button class="tb"><svg><use href="#split"/></svg></button>
        <button class="tb"><svg><use href="#merge"/></svg></button><i class="hsep"></i>
      </div>
    </div>
  </main>

  <aside class="right">
    <section class="dock props">
      <div class="dock-title"><h2>Propiedades (⌘2)</h2><button class="mini on"><svg><use href="#pin"/></svg></button><button class="mini"><svg><use href="#float"/></svg></button><button class="mini"><svg><use href="#close"/></svg></button></div>
      <div class="subject"><svg><use href="#hex"/></svg><strong>ARTICULOS</strong><span>Ítem esquema</span></div>
      <div class="prop-body">
        <div class="sheet plain">
        <table class="prop-table">
          <thead><tr><th>Descripción</th><th>Valor</th></tr></thead>
          <tbody>
          <tr class="group"><td colspan="2"><svg><use href="#down"/></svg>Propiedades</td></tr>
          <tr><td>Identificador</td><td>ARTICULOS</td></tr>
          <tr><td>Nombre</td><td></td></tr>
          <tr><td>Estilos</td><td></td></tr>
          <tr><td>Comentarios</td><td></td></tr>
          <tr><td>Tipo</td><td>Tabla</td></tr>
          <tr><td>Posición X</td><td>634</td></tr>
          <tr><td>Posición Y</td><td>191</td></tr>
          <tr class="tall"><td>Tabla</td><td><div class="ref"><svg class="blue"><use href="#db"/></svg>ARTICULOS@misfacturas_dat</div></td></tr>
          <tr class="tall"><td>Dibujo</td><td><div class="ref"><svg class="cyan"><use href="#tag"/></svg>ARTICULOS@misfacturas_dat</div></td></tr>
          <tr><td>Objeto</td><td></td></tr>
          <tr><td>Fuente</td><td>.AppleSystemUIFont,13</td></tr>
          <tr><td>Color de fuente</td><td><div class="ref"><i class="chip black"></i>#000000</div></td></tr>
          <tr><td>Color de fondo</td><td><div class="ref"><i class="chip cream"></i>#ffffe8</div></td></tr>
          <tr><td>Color de línea</td><td><div class="ref"><i class="chip black"></i>#000000</div></td></tr>
          <tr><td>Grosor de línea</td><td>1</td></tr>
          </tbody>
        </table>
        </div>
        <div class="prop-scroll"><svg><use href="#up"/></svg><svg><use href="#down"/></svg></div>
      </div>
    </section>
    <section class="dock subs">
      <div class="dock-title"><h2>Subobjetos (⌘3)</h2><button class="mini on"><svg><use href="#pin"/></svg></button><button class="mini"><svg><use href="#float"/></svg></button><button class="mini"><svg><use href="#close"/></svg></button></div>
      <div class="sub-body">
        <div class="sub-main">
          <div class="subtabs"><button class="subtab active hexed"><svg><use href="#hex"/></svg>Ítems esquema</button></div>
          <div class="sheet">
          <table class="sub-table">
            <thead><tr><th>Identificador</th><th>Nombre</th></tr></thead>
            <tbody>
            <tr class="sel"><td>ARTICULOS</td><td></td></tr><tr><td>CLIENTES</td><td></td></tr><tr><td>FACTURAS</td><td></td></tr><tr><td>LINEAS</td><td></td></tr><tr><td>SUSCRIPCIONES</td><td></td></tr>
            </tbody>
          </table>
          </div>
        </div>
        <div class="side-tools sub-tools">
          <button class="tb" disabled><svg><use href="#arr-up"/></svg></button>
          <button class="tb"><svg><use href="#arr-dn"/></svg></button><i class="hsep"></i>
          <button class="tb"><svg><use href="#plus-c"/></svg></button>
          <button class="tb"><svg><use href="#trash"/></svg></button><i class="hsep"></i>
          <button class="tb pressed letter"><u>A</u></button>
          <button class="tb"><svg><use href="#nosel"/></svg></button><i class="hsep"></i>
        </div>
      </div>
    </section>
  </aside>
</div>
</div>
</div>
</div>
</body>
</html>
```
FILE: styles.css
```css
* { box-sizing: border-box; }
body { margin: 0; font: 9px/12px Inter, "Noto Sans", sans-serif; color: #111; background: #000; }
svg { fill: currentColor; flex: none; display: block; }
button { font: inherit; color: inherit; background: none; border: 0; padding: 0; display: flex; align-items: center; justify-content: center; }
h1, h2 { margin: 0; font-size: 9px; }
table { border-collapse: separate; border-spacing: 0; width: 100%; table-layout: fixed; }
th, td { padding: 0; text-align: left; font-weight: 400; white-space: nowrap; }
.sprite { position: absolute; width: 0; height: 0; }
.i12 { width: 12px; height: 12px; }
.i10 { width: 10px; height: 10px; }
.blue { color: #1a73b8; }
.red { color: #b51a2b; }
.orange { color: #e59a2c; }
.grey { color: #777; }
.cyan { color: #1aa5dd; }

.desktop { min-height: 100vh; display: flex; flex-direction: column; background: linear-gradient(90deg, #5b009c, #5b009c 45%, #7d006e 85%, #7a0062); }
.menubar { height: 17px; display: flex; align-items: center; gap: 12px; padding: 0 12px; color: #fff; font-weight: 500; }
.menubar .menu:first-child { margin-right: -1px; }
.menubar .app { font-weight: 700; }
.status { margin-left: auto; display: flex; align-items: center; gap: 11px; }
.batt { width: 17px; height: 12px; }
.status .dot { width: 3px; height: 3px; border-radius: 50%; background: #ff5a5a; margin: 0 -7px; }

.frame { flex: 1; display: flex; flex-direction: column; background: linear-gradient(90deg, #000 1px, transparent 1px calc(100% - 1px), #000 calc(100% - 1px)); padding: 0 1px; }
.window { flex: 1; display: flex; flex-direction: column; background: #eaeaea; border-radius: 8px 8px 5px 5px; overflow: hidden; padding-bottom: 16px; }
.titlebar { height: 18px; display: flex; align-items: center; gap: 5px; padding: 0 5px; background: #f8ecf4; border-bottom: 1px solid #dedede; }
.titlebar h1 { flex: 1; text-align: center; padding-right: 42px; color: #3d3d3d; font-weight: 600; }
.light { width: 8px; height: 8px; border-radius: 50%; }
.light.red { background: #e0404f; }
.light.amber { background: #eab03b; }
.light.green { background: #2fc840; }

.toolbar { display: flex; align-items: center; background: linear-gradient(#f6f6f6, #eaeceb); }
.tb { width: 22px; height: 22px; flex: none; color: #757575; position: relative; }
.tb svg { width: 15px; height: 15px; }
.tb.blue { color: #1a73b8; }
.tb.red { color: #b51a2b; }
.tb:disabled { color: #dcdcdc; }
.tb.pressed { background: #d5d5d5; border: 1px solid #bcbcbc; }
.sep { width: 5px; height: 18px; flex: none; background: linear-gradient(#e2e2e2, #e2e2e2) center / 1px 100% no-repeat; }
.sep.wide { width: 10px; }
.caret { width: 8px; height: 8px; color: #444; }
.main-tools { height: 26px; padding-left: 7px; border-bottom: 1px solid #bfc5c5; }
.drop::after { content: ""; position: absolute; right: 1px; bottom: 3px; border: 2px solid transparent; border-top-color: #444; border-bottom: 0; }
.letter { font-size: 12px; font-weight: 600; }
.letter.serif { font-family: "Liberation Serif", serif; font-size: 14px; }

.combo { display: flex; align-items: center; flex: none; height: 15px; background: #fff; border: 1px solid #bdbdbd; border-radius: 2px; color: #333; }
.combo select { flex: 1; min-width: 0; height: 13px; appearance: none; border: 0; background: none; padding: 0 0 0 2px; font: 500 9px/13px Inter, sans-serif; color: #111; }
.combo svg { width: 8px; height: 8px; margin: 0 2px; }
.combo .lead { width: 10px; height: 10px; color: #777; margin: 0 0 0 3px; }
.combo.zoom { width: 56px; }
.combo.finder { width: 93px; margin-left: 1px; margin-right: 3px; }
.combo.off svg { color: #bbb; }

.workspace { flex: 1; display: flex; gap: 5px; min-height: 0; }
.left { width: 251px; flex: none; display: flex; flex-direction: column; }
.right { width: 301px; flex: none; display: flex; flex-direction: column; }
.dock { display: flex; flex-direction: column; min-height: 0; }
.dock-title { height: 14px; display: flex; align-items: center; gap: 2px; padding: 0 1px 0 2px; flex: none; }
.dock-title h2 { flex: 1; font-weight: 400; }
.mini { width: 10px; height: 10px; color: #666; }
.mini svg { width: 8px; height: 8px; }
.mini.on { background: #d0d0d0; border: 1px solid #aaa; }
.subtabs { display: flex; align-items: flex-end; flex: none; }
.subtab { height: 15px; gap: 3px; padding: 0 7px; background: #e4e6e6; border: 1px solid #c9cccc; border-left: 0; border-bottom: 0; }
.subtab svg { width: 10px; height: 10px; color: #777; }
.subtab.active { background: #fafafa; height: 16px; }
.subtab.hexed { height: 17px; background: #f6f6f6; border-left: 1px solid #c9cccc; }
.subtab.hexed svg { color: #d99a3a; }
.subtabs.icons .subtab { width: 29px; height: 16px; }

.explorer { flex: 326 1 0; padding-bottom: 5px; }
.left-tools { height: 28px; padding-left: 2px; border-right: 1px solid #c4c4c4; flex: none; }
.left-tools .combo { margin-left: 6px; }
.more { width: 22px; font-size: 11px; color: #444; }
.tree-canvas { flex: 1; background: #fff; border: solid #c4c4c4; border-width: 0 1px 1px 0; display: flex; flex-direction: column; align-items: center; padding-top: 51px; font-size: 7px; }
.app-icon { width: 20px; height: 20px; color: #e2b955; }
.app-name { margin-top: 13px; }
.dep { width: 8px; height: 48px; margin-top: 12px; }
.dat-icon { width: 17px; height: 19px; color: #5fb1dc; margin-top: 6px; }
.dat-name { margin-top: 3px; padding: 10px 12px; background: #b0d6fa; color: #14283c; }
.inspectors { flex: 317 1 0; }
.explorer .subtabs { padding-top: 1px; }
.sheet { flex: 1; background: #fff; border: solid #c4c4c4; border-width: 0 1px 1px 0; }
.sheet th { height: 12px; font-size: 8px; line-height: 10px; padding: 0 2px; background: linear-gradient(#fdfdfd, #ededed); border-right: 1px solid #d5d5d5; border-bottom: 1px solid #cfcfcf; color: #333; }
.tree th:first-child { width: 105px; }
.tree td { height: 12px; }
.item { display: flex; align-items: center; gap: 4px; padding-left: 3px; height: 12px; }
.item svg { width: 10px; height: 10px; }
.item .tri { width: 7px; height: 7px; margin-right: 1px; color: #555; }
.item.root { font-weight: 700; }

.centre { flex: 1; min-width: 0; display: flex; flex-direction: column; border-right: 1px solid #c4c4c4; }
.tabs { height: 21px; display: flex; align-items: flex-end; flex: none; }
.tab { height: 18px; display: flex; align-items: center; gap: 3px; padding: 0 8px; background: #e3e5e6; border: 1px solid #c9cccc; border-bottom: 0; }
.tab + .tab { border-left: 0; }
.tab svg { width: 10px; height: 10px; }
.tab button svg { width: 9px; height: 9px; color: #111; }
.tab.active { background: #fdfdfd; height: 20px; }
.edit-tools { height: 27px; padding-left: 8px; border: solid #cdcdcd; border-width: 1px 0; flex: none; }
.combo.font { width: 153px; }
.combo.size { width: 30px; margin-left: 1px; }
.swatch::after { content: ""; position: absolute; left: 3px; right: 3px; bottom: 2px; height: 4px; }
.swatch::before { content: ""; position: absolute; left: 9px; top: 10px; width: 5px; height: 2px; background: #777; }
.swatch.ink::after { background: #000; }
.swatch.paper::after { background: #fffee0; }
.edit-tools .swatch + .combo { margin-left: 1px; }

.editor { flex: 1; min-height: 0; display: grid; grid-template-columns: 1fr 10px 27px; grid-template-rows: 1fr 10px; border-left: 1px solid #d0d0d0; border-bottom: 1px solid #c4c4c4; }
.canvas { position: relative; overflow: hidden; background: #fff; }
.links { position: absolute; left: 0; top: 0; fill: none; }
.node { position: absolute; display: flex; align-items: center; height: 44px; background: #ffffe8; border: 1px solid #444; border-radius: 8px; white-space: nowrap; }
.node svg { color: #22b1e6; }
.w34 { width: 34px; height: 24px; }
.w24 { width: 24px; height: 28px; }
.w26 { width: 26px; height: 24px; }
.w28 { width: 28px; height: 28px; }
.w32 { width: 32px; height: 32px; }
.clientes { left: 176px; top: 108px; width: 97px; padding-left: 9px; gap: 10px; }
.facturas { left: 175px; top: 214px; width: 100px; padding-left: 14px; gap: 14px; }
.lineas { left: 281px; top: 321px; width: 90px; padding-left: 13px; gap: 13px; }
.articulos { left: 402px; top: 106px; width: 100px; padding-left: 11px; gap: 10px; border: 0; }
.outline { position: absolute; left: 0; top: 0; width: 100px; height: 44px; fill: none; stroke: #111; stroke-width: 1.500px; stroke-dasharray: 3 2; }
.suscripciones { left: 418px; top: 217px; width: 121px; padding-left: 13px; gap: 11px; }
.pointer { position: absolute; left: 488px; top: 246px; width: 8px; height: 12px; fill: #111; }
.vscroll { grid-column: 2; grid-row: 1; display: flex; flex-direction: column; align-items: center; background: #f8f8f8; border-left: 1px solid #d8d8d8; }
.vscroll svg, .hscroll svg { width: 9px; height: 9px; color: #333; padding: 1px; }
.vtrack { flex: 1; width: 100%; display: flex; align-items: flex-end; }
.vthumb { width: 100%; height: 27%; background: #dedede; border-top: 1px solid #c4c4c4; }
.hscroll { grid-column: 1; grid-row: 2; display: flex; align-items: center; background: #f8f8f8; border-top: 1px solid #d8d8d8; }
.htrack { flex: 1; height: 100%; display: flex; justify-content: flex-end; }
.hthumb { width: 18%; height: 100%; background: #dedede; border-left: 1px solid #c4c4c4; }
.corner { grid-column: 2; grid-row: 2; background: #eee; }
.side-tools { grid-column: 3; grid-row: 1 / 3; display: flex; flex-direction: column; align-items: center; padding-top: 8px; background: #efefef; border-left: 1px solid #c9c9c9; }
.hsep { width: 18px; height: 5px; flex: none; background: linear-gradient(#d9d9d9, #d9d9d9) center / 100% 1px no-repeat; }
.side-tools .tb { height: 21px; }
.side-tools .tb svg { width: 14px; height: 14px; }

.props { flex: 343 1 0; }
.subject { height: 37px; display: flex; align-items: flex-start; padding: 4px 2px 0 4px; gap: 5px; flex: none; }
.subject svg { width: 14px; height: 14px; color: #cf8535; }
.subject strong { flex: 1; }
.prop-body { flex: 1; display: flex; min-height: 0; margin-bottom: 5px; }
.sheet.plain { border: 0; }
.prop-table th:first-child { width: 129px; }
.prop-table td { height: 15px; border-bottom: 1px solid #eee; }
.prop-table tr:nth-child(3n) td { height: 14px; }
.prop-table tr.tall:nth-child(n) td { height: 16px; }
.prop-table td:first-child { padding-left: 17px; border-left: 12px solid #e8e8e8; border-right: 1px solid #eee; }
.prop-table td:last-child { padding-left: 3px; font-weight: 700; }
.prop-table .group td:first-child { height: 15px; background: #efefef; border: 0; padding-left: 4px; font-weight: 600; }
.group svg { display: inline-block; width: 7px; height: 7px; margin-right: 5px; color: #555; }
.ref { display: flex; align-items: center; gap: 5px; }
.ref svg { width: 10px; height: 10px; }
.chip { width: 11px; height: 11px; border: 1px solid #777; margin-right: -4px; }
.chip.black { background: #000; }
.chip.cream { background: #ffffe8; }
.prop-scroll { width: 10px; display: flex; flex-direction: column; justify-content: space-between; align-items: center; background: #f6f6f6; border-left: 1px solid #ddd; }
.prop-scroll svg { width: 8px; height: 8px; }
.subs { flex: 300 1 0; }
.sub-body { flex: 1; display: flex; min-height: 0; }
.sub-main { flex: 1; display: flex; flex-direction: column; }
.sub-table th:first-child { width: 206px; }
.sub-table td { height: 11px; line-height: 10px; padding-left: 3px; }
.sub-table tr:nth-child(3n) td { height: 10px; }
.sub-table .sel td { background: #dcdcdc; }
.sub-tools { width: 26px; padding-top: 7px; border: 0; }
```
